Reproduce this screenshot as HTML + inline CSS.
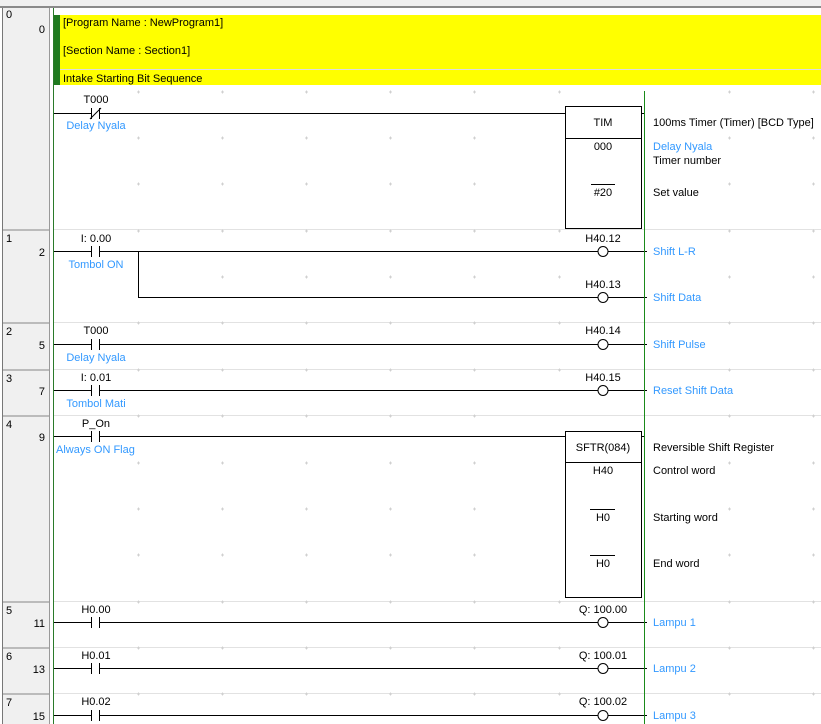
<!DOCTYPE html>
<html><head><meta charset="utf-8"><style>
html,body{margin:0;padding:0;background:#fff;}
svg{display:block;font-family:"Liberation Sans",Arial,sans-serif;font-size:11px;}
.b{fill:#000}.c{fill:#3399ff}.m{text-anchor:middle}.r{text-anchor:end}
</style></head><body>
<svg width="821" height="724" viewBox="0 0 821 724" xmlns="http://www.w3.org/2000/svg">
<rect x="0" y="0" width="821" height="6" fill="#f0f0f0"/>
<rect x="0" y="6" width="821" height="2" fill="#8a8a8a"/>
<!-- left column -->
<rect x="3" y="8" width="46" height="716" fill="#f0f0f0"/>
<rect x="2" y="8" width="1" height="716" fill="#777"/>
<rect x="49" y="8" width="1" height="716" fill="#999"/>
<g fill="#bbb">
<rect x="3" y="229" width="46" height="2"/><rect x="3" y="322" width="46" height="2"/>
<rect x="3" y="369" width="46" height="2"/><rect x="3" y="415" width="46" height="2"/>
<rect x="3" y="601" width="46" height="2"/><rect x="3" y="647" width="46" height="2"/>
<rect x="3" y="693" width="46" height="2"/>
</g>
<!-- rung separators -->
<g fill="#e2e2e2">
<rect x="54" y="229" width="767" height="1"/><rect x="54" y="322" width="767" height="1"/>
<rect x="54" y="369" width="767" height="1"/><rect x="54" y="415" width="767" height="1"/>
<rect x="54" y="601" width="767" height="1"/><rect x="54" y="647" width="767" height="1"/>
<rect x="54" y="693" width="767" height="1"/>
</g>
<!-- rails -->
<rect x="53" y="8" width="1" height="716" fill="#2a7a2a"/>
<rect x="644" y="91" width="1" height="633" fill="#1a8a1a"/>
<!-- comment -->
<rect x="54" y="15" width="767" height="70" fill="#ffff00"/>
<rect x="54" y="15" width="6" height="70" fill="#1f7a1f"/>
<rect x="60" y="69" width="761" height="1" fill="#ddd"/>
<text x="63" y="26" class="b">[Program Name : NewProgram1]</text>
<text x="63" y="54" class="b">[Section Name : Section1]</text>
<text x="63" y="82" class="b">Intake Starting Bit Sequence</text>
<!-- left numbers -->
<g class="b">
<text x="6" y="18">0</text><text x="45" y="33" class="r">0</text>
<text x="6" y="242">1</text><text x="45" y="256" class="r">2</text>
<text x="6" y="335">2</text><text x="45" y="349" class="r">5</text>
<text x="6" y="382">3</text><text x="45" y="395" class="r">7</text>
<text x="6" y="428">4</text><text x="45" y="441" class="r">9</text>
<text x="6" y="614">5</text><text x="45" y="627" class="r">11</text>
<text x="6" y="660">6</text><text x="45" y="673" class="r">13</text>
<text x="6" y="706">7</text><text x="45" y="720" class="r">15</text>
</g>
<!-- grid dots -->
<g stroke="#c8c8c8" stroke-width="1">
<path id="d" d=""/>
</g>
<g fill="#cfcfcf">
<!-- generated-ish dots -->
<g id="row">
</g>
</g>
<g stroke="#d0d0d0" stroke-width="1" fill="none">
<path d="M137 92h3M138.5 90.5v3M221 92h3M222.5 90.5v3M305 92h3M306.5 90.5v3M389 92h3M390.5 90.5v3M473 92h3M474.5 90.5v3M558 92h3M559.5 90.5v3M728 92h3M729.5 90.5v3M812 92h3M813.5 90.5v3"/>
<path d="M137 138h3M138.5 136.5v3M221 138h3M222.5 136.5v3M305 138h3M306.5 136.5v3M389 138h3M390.5 136.5v3M473 138h3M474.5 136.5v3M728 138h3M729.5 136.5v3M812 138h3M813.5 136.5v3"/>
<path d="M137 184h3M138.5 182.5v3M221 184h3M222.5 182.5v3M305 184h3M306.5 182.5v3M389 184h3M390.5 182.5v3M473 184h3M474.5 182.5v3M728 184h3M729.5 182.5v3M812 184h3M813.5 182.5v3"/>
<path d="M137 231h3M138.5 229.5v3M221 231h3M222.5 229.5v3M305 231h3M306.5 229.5v3M389 231h3M390.5 229.5v3M473 231h3M474.5 229.5v3M558 231h3M559.5 229.5v3M728 231h3M729.5 229.5v3M812 231h3M813.5 229.5v3"/>
<path d="M221 277h3M222.5 275.5v3M305 277h3M306.5 275.5v3M389 277h3M390.5 275.5v3M473 277h3M474.5 275.5v3M558 277h3M559.5 275.5v3M728 277h3M729.5 275.5v3M812 277h3M813.5 275.5v3"/>
<path d="M137 323h3M138.5 321.5v3M221 323h3M222.5 321.5v3M305 323h3M306.5 321.5v3M389 323h3M390.5 321.5v3M473 323h3M474.5 321.5v3M558 323h3M559.5 321.5v3M728 323h3M729.5 321.5v3M812 323h3M813.5 321.5v3"/>
<path d="M137 370h3M138.5 368.5v3M221 370h3M222.5 368.5v3M305 370h3M306.5 368.5v3M389 370h3M390.5 368.5v3M473 370h3M474.5 368.5v3M558 370h3M559.5 368.5v3M728 370h3M729.5 368.5v3M812 370h3M813.5 368.5v3"/>
<path d="M137 416h3M138.5 414.5v3M221 416h3M222.5 414.5v3M305 416h3M306.5 414.5v3M389 416h3M390.5 414.5v3M473 416h3M474.5 414.5v3M728 416h3M729.5 414.5v3M812 416h3M813.5 414.5v3"/>
<path d="M137 463h3M138.5 461.5v3M221 463h3M222.5 461.5v3M305 463h3M306.5 461.5v3M389 463h3M390.5 461.5v3M473 463h3M474.5 461.5v3M728 463h3M729.5 461.5v3M812 463h3M813.5 461.5v3"/>
<path d="M137 509h3M138.5 507.5v3M221 509h3M222.5 507.5v3M305 509h3M306.5 507.5v3M389 509h3M390.5 507.5v3M473 509h3M474.5 507.5v3M728 509h3M729.5 507.5v3M812 509h3M813.5 507.5v3"/>
<path d="M137 555h3M138.5 553.5v3M221 555h3M222.5 553.5v3M305 555h3M306.5 553.5v3M389 555h3M390.5 553.5v3M473 555h3M474.5 553.5v3M728 555h3M729.5 553.5v3M812 555h3M813.5 553.5v3"/>
<path d="M137 602h3M138.5 600.5v3M221 602h3M222.5 600.5v3M305 602h3M306.5 600.5v3M389 602h3M390.5 600.5v3M473 602h3M474.5 600.5v3M558 602h3M559.5 600.5v3M728 602h3M729.5 600.5v3M812 602h3M813.5 600.5v3"/>
<path d="M137 648h3M138.5 646.5v3M221 648h3M222.5 646.5v3M305 648h3M306.5 646.5v3M389 648h3M390.5 646.5v3M473 648h3M474.5 646.5v3M558 648h3M559.5 646.5v3M728 648h3M729.5 646.5v3M812 648h3M813.5 646.5v3"/>
<path d="M137 694h3M138.5 692.5v3M221 694h3M222.5 692.5v3M305 694h3M306.5 692.5v3M389 694h3M390.5 692.5v3M473 694h3M474.5 692.5v3M558 694h3M559.5 692.5v3M728 694h3M729.5 692.5v3M812 694h3M813.5 692.5v3"/>
</g>
<!-- ladder wiring -->
<g stroke="#000" stroke-width="1" fill="none">
<!-- rung 0 -->
<path d="M54 113.5H91M100 113.5H565"/>
<path d="M91.5 108v11M99.5 108v11M90 119L101 108"/>
<rect x="565.5" y="106.5" width="76" height="122"/>
<path d="M565 138.5H642M591 184.5h24"/>
<path d="M642 113.5h2"/>
<!-- rung 1 -->
<path d="M54 251.5H91M100 251.5H598M608 251.5H644M91.5 246v11M99.5 246v11"/>
<path d="M138.5 251v46M138 297.5H598M608 297.5H644"/>
<circle cx="603" cy="251.5" r="5"/><circle cx="603" cy="297.5" r="5"/>
<!-- rung 2 -->
<path d="M54 344.5H91M100 344.5H598M608 344.5H644M91.5 339v11M99.5 339v11"/>
<circle cx="603" cy="344.5" r="5"/>
<!-- rung 3 -->
<path d="M54 390.5H91M100 390.5H598M608 390.5H644M91.5 385v11M99.5 385v11"/>
<circle cx="603" cy="390.5" r="5"/>
<!-- rung 4 -->
<path d="M54 436.5H91M100 436.5H565M91.5 431v11M99.5 431v11M642 436.5h2"/>
<rect x="565.5" y="431.5" width="76" height="166"/>
<path d="M565 462.5H642M590 509.5h25M590 555.5h25"/>
<!-- rung 5-7 -->
<path d="M54 622.5H91M100 622.5H598M608 622.5H644M91.5 617v11M99.5 617v11"/>
<circle cx="603" cy="622.5" r="5"/>
<path d="M54 668.5H91M100 668.5H598M608 668.5H644M91.5 663v11M99.5 663v11"/>
<circle cx="603" cy="668.5" r="5"/>
<path d="M54 715.5H91M100 715.5H598M608 715.5H644M91.5 710v11M99.5 710v11"/>
<circle cx="603" cy="715.5" r="5"/>
</g>
<!-- outputs ticks -->
<g fill="#000">
<rect x="645" y="251" width="2" height="1"/><rect x="645" y="297" width="2" height="1"/>
<rect x="645" y="344" width="2" height="1"/><rect x="645" y="390" width="2" height="1"/>
<rect x="645" y="622" width="2" height="1"/><rect x="645" y="668" width="2" height="1"/>
<rect x="645" y="715" width="2" height="1"/>
</g>
<!-- labels -->
<g class="b">
<text x="96" y="103" class="m">T000</text>
<text x="603" y="126" class="m">TIM</text>
<text x="603" y="150" class="m">000</text>
<text x="603" y="196" class="m">#20</text>
<text x="653" y="126">100ms Timer (Timer) [BCD Type]</text>
<text x="653" y="164">Timer number</text>
<text x="653" y="196">Set value</text>
<text x="96" y="242" class="m">I: 0.00</text>
<text x="603" y="242" class="m">H40.12</text>
<text x="603" y="288" class="m">H40.13</text>
<text x="96" y="334" class="m">T000</text>
<text x="603" y="334" class="m">H40.14</text>
<text x="96" y="381" class="m">I: 0.01</text>
<text x="603" y="381" class="m">H40.15</text>
<text x="96" y="427" class="m">P_On</text>
<text x="603" y="451" class="m">SFTR(084)</text>
<text x="603" y="474" class="m">H40</text>
<text x="603" y="521" class="m">H0</text>
<text x="603" y="567" class="m">H0</text>
<text x="653" y="451">Reversible Shift Register</text>
<text x="653" y="474">Control word</text>
<text x="653" y="521">Starting word</text>
<text x="653" y="567">End word</text>
<text x="96" y="613" class="m">H0.00</text>
<text x="603" y="613" class="m">Q: 100.00</text>
<text x="96" y="659" class="m">H0.01</text>
<text x="603" y="659" class="m">Q: 100.01</text>
<text x="96" y="705" class="m">H0.02</text>
<text x="603" y="705" class="m">Q: 100.02</text>
</g>
<g class="c">
<text x="96" y="129" class="m">Delay Nyala</text>
<text x="653" y="150">Delay Nyala</text>
<text x="96" y="268" class="m">Tombol ON</text>
<text x="653" y="255">Shift L-R</text>
<text x="653" y="301">Shift Data</text>
<text x="96" y="361" class="m">Delay Nyala</text>
<text x="653" y="348">Shift Pulse</text>
<text x="96" y="407" class="m">Tombol Mati</text>
<text x="653" y="394">Reset Shift Data</text>
<text x="56" y="453">Always ON Flag</text>
<text x="653" y="626">Lampu 1</text>
<text x="653" y="672">Lampu 2</text>
<text x="653" y="719">Lampu 3</text>
</g>
</svg>
</body></html>
